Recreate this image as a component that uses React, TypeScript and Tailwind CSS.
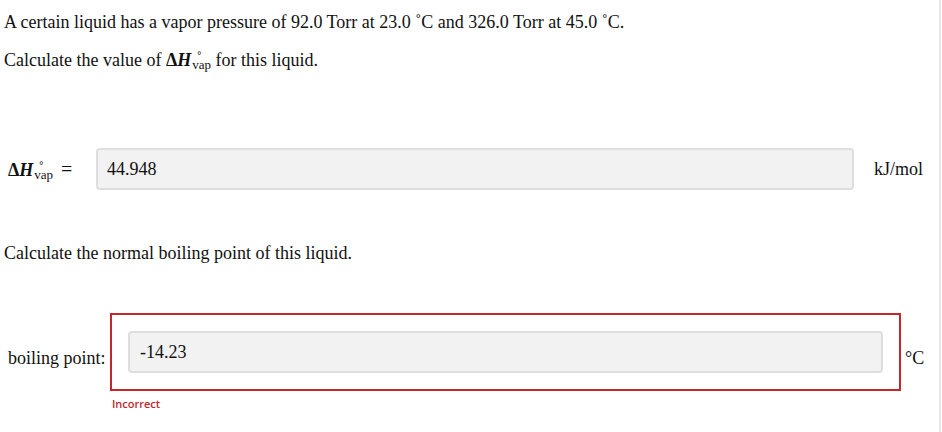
const serif = { fontFamily: '"Liberation Serif", "Times New Roman", serif' }

function DeltaH() {
    return (
        <span className="inline-flex items-baseline">
            <span className="font-bold">Δ</span>
            <span className="italic font-bold">H</span>
            <span className="relative inline-block text-[13px] leading-none translate-y-[3px] ml-[1px]">
                vap
                <span className="absolute left-[5px] top-[-7px] text-[10px] font-bold leading-none">°</span>
            </span>
        </span>
    )
}

export default function App() {
    return (
        <div className="w-[941px] h-[432px] bg-white border-r-2 border-[#e6e6e6] text-[#111] text-[18px]" style={serif}>
            <p className="pl-[4px] pt-[11px] leading-[22px]">
                A certain liquid has a vapor pressure of 92.0 Torr at 23.0 ˚C and 326.0 Torr at 45.0 ˚C.
            </p>
            <p className="pl-[4px] mt-[16px] h-[22px] leading-[22px]">
                Calculate the value of <DeltaH /> for this liquid.
            </p>

            <div className="flex items-center mt-[77px] h-[42px]">
                <div className="w-[96px] pl-[8px] flex items-baseline gap-[8px]">
                    <DeltaH />
                    <span className="text-[20px]">=</span>
                </div>
                <div className="w-[758px] h-[42px] rounded-[4px] border-2 border-[#dedede] bg-[#f2f2f2] flex items-center pl-[9px]">
                    44.948
                </div>
                <span className="ml-[20px]">kJ/mol</span>
            </div>

            <p className="pl-[4px] mt-[52px] h-[22px] leading-[22px]">Calculate the normal boiling point of this liquid.</p>

            <div className="flex items-center mt-[49px]">
                <span className="w-[110px] pl-[8px] translate-y-[6px]">boiling point:</span>
                <div className="w-[791px] h-[78px] border-2 border-[#c1272d] flex items-center pl-[16px]">
                    <div className="w-[755px] h-[42px] rounded-[4px] border-2 border-[#dedede] bg-[#f2f2f2] flex items-center pl-[10px]">
                        -14.23
                    </div>
                </div>
                <span className="ml-[4px] translate-y-[6px]">°C</span>
            </div>
            <p className="pl-[112px] mt-[5px] leading-[15px] text-[11px] font-semibold text-[#c1272d]" style={{ fontFamily: '"Open Sans", sans-serif' }}>
                Incorrect
            </p>
        </div>
    )
}
